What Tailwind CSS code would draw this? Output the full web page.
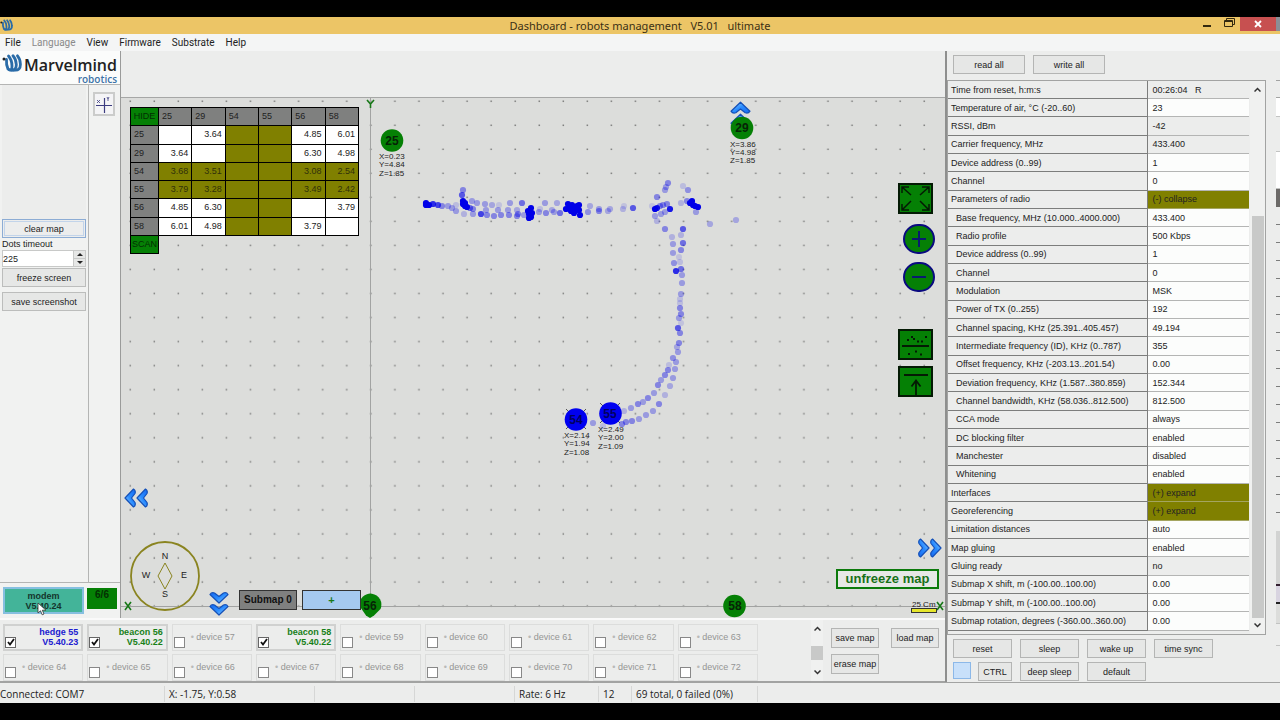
<!DOCTYPE html>
<html lang="en">

<head>
    <meta charset="UTF-8">
    <meta name="viewport" content="width=device-width, initial-scale=1.0">
    <title>Dashboard - robots management</title>
    <script src="https://cdn.jsdelivr.net/npm/@tailwindcss/browser@4"></script>
</head>

<body class="min-h-screen bg-black py-[17px] flex flex-col font-['Liberation_Sans',Arial,sans-serif] text-[9px] leading-3 text-[#222]">
    <svg class="absolute w-0 h-0">
        <defs>
            <linearGradient id="arrowFill" x1="0" y1="0" x2="1" y2="1">
                <stop offset="0" stop-color="#9ad8ff" />
                <stop offset="0.5" stop-color="#2a8cff" />
                <stop offset="1" stop-color="#1668f0" />
            </linearGradient>
            <symbol id="chevron" viewBox="0 0 20 12">
                <path d="M10 1 L19 9.500 Q17.500 12 14.500 11 L10 7.500 L5.500 11 Q2.500 12 1 9.500 Z" fill="url(#arrowFill)" stroke="#1450b8" stroke-width="1.200" stroke-linejoin="round" />
            </symbol>
            <symbol id="waves" viewBox="0 0 20 18">
                <g fill="none" stroke="#2a6ca8" stroke-width="2.800" stroke-linecap="round">
                    <path d="M4.500 5.500 Q4 11 6 15 Q10.200 17.500 10 12 Q10 6 6.500 2" />
                    <path d="M7.500 16 Q14.500 17.500 14.300 10.500 Q14 5 11 1.800" />
                    <path d="M12 16 Q18.700 17 18.400 10 Q18.300 5 15.500 1.800" />
                </g>
                <circle cx="2" cy="5" r="1.500" fill="#222" />
            </symbol>
        </defs>
    </svg>

    <div class="flex-1 flex flex-col bg-[#ecedec] overflow-hidden">
        <header class="relative h-[17px] bg-[#ecc566] flex items-center justify-center font-['Noto_Sans',sans-serif]">
            <svg class="absolute left-0 top-[2px] w-[13px] h-[12px]"><use href="#waves" /></svg>
            <h1 class="text-[11px] leading-4 text-[#3b3015] whitespace-pre">Dashboard - robots management   V5.01   ultimate</h1>
            <div class="absolute right-0 top-0 flex">
                <button aria-label="Minimize" class="w-[22px] h-[14px] flex justify-center items-end pb-[4px]"><span class="w-[8px] h-[2px] bg-[#33290f]"></span></button>
                <button aria-label="Restore" class="w-[22px] h-[14px] flex justify-center">
                    <svg class="w-[11px] h-[11px]" viewBox="0 0 11 11" fill="none" stroke="#33290f"><path d="M2.500 3V1.500h8v6h-1.500M.5 3.500h8v6h-8zM.5 4.500h8" /></svg>
                </button>
                <button aria-label="Close" class="w-[36px] h-[14px] bg-[#c75050] flex justify-center items-center">
                    <svg class="w-[8px] h-[8px]" viewBox="0 0 8 8" stroke="#fff" stroke-width="1.800"><path d="M1 1l6 6M7 1l-6 6" /></svg>
                </button>
                <div class="w-[4px] h-[14px] bg-[#8a8f96]"></div>
            </div>
        </header>

        <nav class="h-[17px] px-[5px] bg-[#f4f5f5] flex items-center gap-[11px] font-[Roboto,sans-serif] text-[10px] text-[#222]">
            <button>File</button>
            <button class="text-[#8a8a8a]">Language</button>
            <button>View</button>
            <button>Firmware</button>
            <button>Substrate</button>
            <button>Help</button>
        </nav>

        <div class="flex-1 flex min-h-0">
            <main class="flex-1 min-w-0 flex flex-col">
                <div class="flex-1 flex min-h-0">
                    <!-- left tools -->
                    <aside class="w-[121px] shrink-0 flex flex-col border-r border-[#9a9b9a] bg-[#f1f2f1]">
                        <div class="h-[34px] bg-[#fbfcfb] border-b border-[#b4b5b4] pl-[2px] pr-[3px] flex justify-between">
                            <svg class="w-[20px] h-[18px] mt-[3px] shrink-0"><use href="#waves" /></svg>
                            <div class="font-['Open_Sans',sans-serif] font-semibold text-right">
                                <div class="text-[16px] leading-[18px] mt-[5px] text-[#222]">Marvelmind</div>
                                <div class="text-[10px] leading-[10px] text-[#3b73a8]">robotics</div>
                            </div>
                        </div>
                        <div class="flex-1 flex">
                            <div class="w-[89px] border-r border-[#b4b5b4] flex flex-col px-[2px]">
                                <div class="h-[134px] bg-[#ecedec]"></div>
                                <button class="h-[19px] border border-[#8cacd4] outline outline-1 -outline-offset-3 outline-[#c2d4ea] bg-[#eceded]">clear map</button>
                                <label for="timeout" class="leading-[13px] h-[12px]">Dots timeout</label>
                                <div class="flex h-[17px] bg-white border border-[#c8c9c8]">
                                    <input id="timeout" value="225" class="min-w-0 flex-1 bg-white outline-none">
                                    <div class="w-[12px] flex flex-col bg-[#e6e7e6] border-l border-[#c8c9c8]">
                                        <button aria-label="Increase" class="flex-1 flex items-center justify-center border-b border-[#c8c9c8]"><svg class="w-[6px] h-[3px]" viewBox="0 0 6 3"><path d="M3 0l3 3H0z" fill="#222" /></svg></button>
                                        <button aria-label="Decrease" class="flex-1 flex items-center justify-center"><svg class="w-[6px] h-[3px]" viewBox="0 0 6 3"><path d="M3 3l3-3H0z" fill="#222" /></svg></button>
                                    </div>
                                </div>
                                <button class="h-[19px] mt-px border border-[#bcbdbc] bg-[#e6e7e6]">freeze screen</button>
                                <button class="h-[19px] mt-[5px] border border-[#bcbdbc] bg-[#e6e7e6]">save screenshot</button>
                            </div>
                            <div class="flex-1 pt-[7px] pr-[2px] flex justify-center items-start">
                                <button aria-label="Axes" class="w-[22px] h-[24px] border-2 border-[#cbcccb] bg-[#f4f4f6]">
                                    <svg class="w-[18px] h-[20px]" viewBox="0 0 18 20" stroke="#3c3c80" fill="none"><path d="M1 11.500h16M9.500 4v15" stroke-width="1.200" /><path d="M2 6l3 3M5 6l-3 3M12 3l1 2 1-2M13 5v2" stroke-width=".8" /></svg>
                                </button>
                            </div>
                        </div>
                        <div class="relative h-[36px] border-t border-[#b4b5b4] flex gap-[3px] pt-[4px] pl-[3px] pr-[3px]">
                            <button class="w-[81px] h-[27px] bg-[#43b499] border-2 border-[#86bfe0] font-bold leading-[10px] text-[#14352c]">modem<br>V5.40.24</button>
                            <div class="flex-1 h-[21px] mt-px bg-[#058005] text-[#032f03] text-[10px] font-bold leading-[14px] text-center">6/6</div>
                            <svg class="absolute left-[37px] top-[19px] w-[10px] h-[14px]" viewBox="0 0 10 14"><path d="M1 1v10l2.500-2.200 1.700 4 1.800-.8-1.700-3.800H9z" fill="#fff" stroke="#333" stroke-width=".8" /></svg>
                        </div>
                    </aside>

                    <div class="flex-1 flex flex-col min-w-0">
                        <div class="h-[47px] border-b border-[#a6a7a6]"></div>
                        <div class="relative flex-1 bg-[#dcdddb] overflow-hidden">
                            <svg class="absolute inset-0 w-full h-full">
                                <defs>
                                    <pattern id="grid" x="8" y="2" width="24.060" height="24.040" patternUnits="userSpaceOnUse">
                                        <rect x="0.500" y="0.500" width="1.500" height="1.500" fill="#7b7c7b" />
                                    </pattern>
                                </defs>
                                <rect width="100%" height="100%" fill="url(#grid)" />
                                <!-- world origin of the drawing is the window corner -->
                                <g transform="translate(-121 -98)">
                                    <path d="M370.500 98V606M121 606.500H945" stroke="#a2a3a2" />
                                    <path d="M367 100l3.500 4 3.500-4M370.500 104v4M125 602l6 8M131 602l-6 8M937 602l6 8M943 602l-6 8" stroke="#187818" stroke-width="1.600" fill="none" />
                                    <g id="track" fill="#0000e8"></g>
                                    <g stroke="#333" stroke-width=".8">
                                        <path d="M566 409l20 20M586 409l-20 20M600 403l20 20M620 403l-20 20" />
                                    </g>
                                    <use href="#chevron" x="730" y="101" width="21" height="13" />
                                    <use href="#chevron" x="730" y="113" width="21" height="13" />
                                    <g fill="#058005">
                                        <circle cx="392" cy="140.500" r="11.300" />
                                        <circle cx="742" cy="128" r="11.300" />
                                        <path d="M359.500 606a11 11 0 1 1 21 3l-6.500 6.500-4 2.500-4-2.500z" />
                                        <circle cx="734.500" cy="606" r="11.300" />
                                    </g>
                                    <g fill="#0000f0">
                                        <circle cx="576" cy="419.500" r="11.300" />
                                        <circle cx="610.500" cy="413.500" r="11.300" />
                                    </g>
                                    <g font-size="12" font-weight="bold" text-anchor="middle" fill="#062406">
                                        <text x="392" y="145">25</text>
                                        <text x="742" y="132">29</text>
                                        <text x="370" y="610">56</text>
                                        <text x="735" y="610">58</text>
                                    </g>
                                    <g font-size="12" font-weight="bold" text-anchor="middle" fill="#000060">
                                        <text x="576" y="424">54</text>
                                        <text x="610" y="418">55</text>
                                    </g>
                                    <g font-size="8" fill="#222">
                                        <text x="379" y="159">X=0.23</text><text x="379" y="167">Y=4.84</text><text x="379" y="176">Z=1.85</text>
                                        <text x="730" y="147">X=3.86</text><text x="730" y="155">Y=4.98</text><text x="730" y="163">Z=1.85</text>
                                        <text x="564" y="438">X=2.14</text><text x="564" y="446">Y=1.94</text><text x="564" y="455">Z=1.08</text>
                                        <text x="598" y="432">X=2.49</text><text x="598" y="440">Y=2.00</text><text x="598" y="449">Z=1.09</text>
                                        <text x="912" y="607">25 Cm</text>
                                    </g>
                                    <rect x="911.500" y="608.500" width="25" height="4" fill="#e6e62a" stroke="#333" />
                                    <!-- compass -->
                                    <g fill="none" stroke="#8a8420">
                                        <circle cx="165" cy="576" r="34" stroke-width="1.800" />
                                        <path d="M165 563l7 13-7 13-7-13z" />
                                    </g>
                                    <g font-size="9" text-anchor="middle" fill="#222">
                                        <text x="165" y="559">N</text><text x="165" y="597">S</text><text x="146" y="578">W</text><text x="184" y="578">E</text>
                                    </g>
                                </g>
                            </svg>

                            <table class="absolute left-[9px] top-[9px] w-[229px] h-[147px] table-fixed border-collapse text-right leading-[11px]">
                                <colgroup><col class="w-[28px]"></colgroup>
                                <tbody id="distances"></tbody>
                            </table>

                            <button aria-label="Scroll left" class="absolute left-[3px] top-[390px] w-[24px] h-[20px]">
                                <svg class="w-full h-full" viewBox="0 0 24 20"><g transform="rotate(-90 10 10)"><use href="#chevron" x="0" y="0" width="20" height="12" /><use href="#chevron" x="0" y="12" width="20" height="12" /></g></svg>
                            </button>
                            <button aria-label="Scroll right" class="absolute left-[797px] top-[440px] w-[24px] h-[20px]">
                                <svg class="w-full h-full" viewBox="0 0 24 20"><g transform="rotate(90 10 10)"><use href="#chevron" x="0" y="-4" width="20" height="12" /><use href="#chevron" x="0" y="8" width="20" height="12" /></g></svg>
                            </button>
                            <button aria-label="Scroll down" class="absolute left-[87px] top-[494px] w-[22px] h-[24px]">
                                <svg class="w-full h-full" viewBox="0 0 22 24"><g transform="rotate(180 11 12)"><use href="#chevron" x="1" y="0" width="20" height="12" /><use href="#chevron" x="1" y="12" width="20" height="12" /></g></svg>
                            </button>

                            <div class="absolute left-[118px] top-[492px] flex gap-[5px]">
                                <button class="w-[58px] h-[20px] bg-[#7f807f] border border-[#333] text-[10px] font-bold text-[#111]">Submap 0</button>
                                <button class="w-[59px] h-[20px] bg-[#a5c9f0] border border-[#333] text-[11px] font-bold text-[#187818]">+</button>
                            </div>
                            <button class="absolute right-[6px] top-[471px] w-[103px] h-[20px] bg-[#e6e8e6] border-2 border-[#0c7a0c] text-[13px] font-bold text-[#187018]">unfreeze map</button>

                            <button aria-label="Fit map" class="absolute right-[12px] top-[85px] w-[35px] h-[31px] bg-[#058005] border-2 border-[#041a04]">
                                <svg class="w-[31px] h-[27px]" viewBox="0 0 31 27" fill="none" stroke="#041a04" stroke-width="1.500"><path d="M2 8V2h7M2 2l9 8M22 2h7v6M29 2l-9 8M2 19v6h7M2 25l9-9M22 25h7v-6M29 25l-9-9" /></svg>
                            </button>
                            <button aria-label="Zoom in" class="absolute right-[10px] top-[126px] w-[32px] h-[30px] rounded-full bg-[#058005] border-2 border-[#0a0a80] flex items-center justify-center">
                                <svg class="w-[16px] h-[16px]" viewBox="0 0 16 16" stroke="#0a1a70" stroke-width="2"><path d="M1 8h14M8 0v16" /></svg>
                            </button>
                            <button aria-label="Zoom out" class="absolute right-[10px] top-[164px] w-[32px] h-[30px] rounded-full bg-[#058005] border-2 border-[#0a0a80] flex items-center justify-center">
                                <svg class="w-[16px] h-[16px]" viewBox="0 0 16 16" stroke="#0a1a70" stroke-width="2"><path d="M1 8h14" /></svg>
                            </button>
                            <button aria-label="Show dots" class="absolute right-[12px] top-[231px] w-[35px] h-[31px] bg-[#058005] border-2 border-[#041a04]">
                                <svg class="w-[31px] h-[27px]" viewBox="0 0 31 27" fill="#041a04"><path d="M2 14h27v2H2zM7 8h2v2H7zM11 5h2v2h-2zM13 7h2v2h-2zM17 9.500h2v2h-2zM21 9.500h2v2h-2zM25 5h2v2h-2zM8 22h2v2H8zM15 19.500h2v2h-2zM20 22.500h2v2h-2z" /></svg>
                            </button>
                            <button aria-label="Move up" class="absolute right-[12px] top-[268px] w-[35px] h-[31px] bg-[#058005] border-2 border-[#041a04]">
                                <svg class="w-[31px] h-[27px]" viewBox="0 0 31 27" fill="none" stroke="#041a04" stroke-width="1.800"><path d="M4 7h24M16 12v15M11.500 18.500l4.500-6 4.500 6" /></svg>
                            </button>
                        </div>
                    </div>
                </div>

                <!-- devices -->
                <section class="h-[65px] shrink-0 border-t-2 border-t-[#fafafa] border-b-2 border-b-[#a2a3a2] flex">
                    <div id="devices" class="w-[758px] shrink-0 pl-[3px] pt-1 grid grid-cols-9 grid-rows-[27px_27px] gap-x-1 gap-y-[3px]"></div>
                    <div class="ml-auto mr-[8px] w-[12px] flex flex-col items-center justify-between py-[6px] bg-[#f0f1f0]">
                        <svg class="w-[7px] h-[5px]" viewBox="0 0 7 5" fill="none" stroke="#333" stroke-width="1.500"><path d="M.5 4.500l3-3 3 3" /></svg>
                        <div class="w-full h-[14px] mt-[5px] bg-[#c8c9c8]"></div>
                        <svg class="w-[7px] h-[5px]" viewBox="0 0 7 5" fill="none" stroke="#333" stroke-width="1.500"><path d="M.5 .5l3 3 3-3" /></svg>
                    </div>
                    <div class="mr-[6px] pt-[8px] grid grid-cols-[48px_48px] auto-rows-[20px] gap-x-3 gap-y-[6px] content-start">
                        <button class="border border-[#b4b5b4] bg-[#e6e7e6]">save map</button>
                        <button class="border border-[#b4b5b4] bg-[#e6e7e6]">load map</button>
                        <button class="border border-[#b4b5b4] bg-[#e6e7e6]">erase map</button>
                    </div>
                </section>
            </main>

            <!-- parameters -->
            <section class="w-[335px] shrink-0 flex border-b border-[#a2a3a2]">
                <div class="flex-1 flex flex-col border-l-2 border-[#8e8f8e]">
                    <div class="h-[29px] pl-[6px] pt-[4px] flex gap-[8px]">
                        <button class="w-[72px] h-[19px] border border-[#b4b5b4] bg-[#e6e7e6]">read all</button>
                        <button class="w-[72px] h-[19px] border border-[#b4b5b4] bg-[#e6e7e6]">write all</button>
                    </div>
                    <div class="flex mr-[10px] border border-[#a2a3a2] h-[555px]">
                        <table class="w-[301px] h-[550px] table-fixed border-collapse">
                            <colgroup><col class="w-[199px]"><col></colgroup>
                            <tbody id="params"></tbody>
                        </table>
                        <div class="ml-auto w-[15px] flex flex-col items-center py-[6px] bg-[#f0f1f0]">
                            <svg class="w-[7px] h-[5px]" viewBox="0 0 7 5" fill="none" stroke="#333" stroke-width="1.500"><path d="M.5 4.500l3-3 3 3" /></svg>
                            <div class="w-[12px] flex-1 mt-[124px] mb-[5px] bg-[#c8c9c8]"></div>
                            <svg class="w-[7px] h-[5px]" viewBox="0 0 7 5" fill="none" stroke="#333" stroke-width="1.500"><path d="M.5 .5l3 3 3-3" /></svg>
                        </div>
                    </div>
                    <div class="pl-[6px] pt-[4px] grid grid-cols-[59px_59px_59px_59px] auto-rows-[19px] gap-x-2 gap-y-1">
                        <button class="border border-[#b4b5b4] bg-[#e6e7e6]">reset</button>
                        <button class="border border-[#b4b5b4] bg-[#e6e7e6]">sleep</button>
                        <button class="border border-[#b4b5b4] bg-[#e6e7e6]">wake up</button>
                        <button class="border border-[#b4b5b4] bg-[#e6e7e6]">time sync</button>
                        <div class="flex justify-between">
                            <button aria-label="Color" class="w-[18px] h-[17px] border border-[#8cb8e8] bg-[#c8e0fa]"></button>
                            <button class="w-[34px] border border-[#b4b5b4] bg-[#e6e7e6]">CTRL</button>
                        </div>
                        <button class="border border-[#b4b5b4] bg-[#e6e7e6]">deep sleep</button>
                        <button class="border border-[#b4b5b4] bg-[#e6e7e6]">default</button>
                    </div>
                </div>
                <!-- sliver of the window behind -->
                <div class="w-[4px] flex flex-col pt-[29px] bg-[#ecedec]">
                    <div class="h-[18px] border-y border-[#a2a3a2]"></div>
                    <div class="h-[18px] bg-white"></div>
                    <div class="h-[36px] border-y border-[#c2c3c2]"></div>
                    <div class="h-[37px] bg-white border-b border-[#c2c3c2]"></div>
                    <div class="h-[18px] bg-[#6c6a68]"></div>
                    <div id="sliver"></div>
                    <div class="h-[55px] mt-[18px] bg-[#d2d3d2] border-b-2 border-[#332030]"></div>
                    <div class="h-[18px] bg-[#d8d4e0] border-b-2 border-[#222]"></div>
                    <div class="h-[20px] bg-[#dcdddb] border-b border-[#c2c3c2]"></div>
                    <div class="h-[22px] border-b border-[#c2c3c2]"></div>
                </div>
            </section>
        </div>

        <footer class="h-[20px] pt-[2px] flex items-center font-['Open_Sans',sans-serif] text-[10px] leading-4 text-[#222]">
            <div class="w-[165px] border-r border-[#d6d7d6]">Connected: COM7</div>
            <div class="w-[150px] border-r border-[#d6d7d6] pl-1">X: -1.75, Y:0.58</div>
            <div class="w-[100px] h-4 border-r border-[#d6d7d6]"></div>
            <div class="w-[100px] h-4 border-r border-[#d6d7d6]"></div>
            <div class="w-[84px] border-r border-[#d6d7d6] pl-1">Rate: 6 Hz</div>
            <div class="w-[33px] border-r border-[#d6d7d6] pl-1">12</div>
            <div class="w-[126px] border-r border-[#d6d7d6] pl-1">69 total, 0 failed (0%)</div>
        </footer>
    </div>

    <script>
        // Hedgehog track: x, y, opacity
        const track = [
            [426, 203, 1], [426, 205, 1], [429, 205, 1], [433, 204, .8], [438, 205, .7], [442, 206, .4], [448, 206, .3], [452, 208, .3], [456, 211, .3], [456, 205, .15],
            [463, 190, .4], [462, 195, .6], [463, 201, 1], [463, 204, 1], [465, 203, 1], [465, 206, 1], [467, 207, 1], [472, 201, .3], [473, 209, .4], [470, 208, .5], [477, 203, .3], [464, 214, .2], [473, 214, .3],
            [485, 204, .3], [481, 214, .7], [486, 210, .3], [487, 215, .4], [492, 205, .25], [494, 216, .4], [499, 205, .12], [498, 210, .3], [501, 215, .4], [510, 203, .3], [508, 210, .3], [509, 215, .4],
            [517, 210, .25], [517, 216, .4], [518, 214, .4], [522, 203, .5], [524, 215, .3], [531, 208, 1], [528, 211, 1], [532, 213, 1], [529, 218, 1], [531, 217, 1], [529, 214, 1],
            [540, 209, .15], [539, 212, .3], [545, 203, .3], [546, 213, .4], [552, 210, .25], [557, 203, .25], [554, 212, .3], [560, 213, .5],
            [568, 204, 1], [566, 209, 1], [570, 208, 1], [574, 207, 1], [579, 205, 1], [579, 210, 1], [574, 213, 1], [580, 215, 1], [571, 211, 1], [576, 210, 1], [577, 206, 1], [572, 205, 1],
            [590, 206, .25], [588, 212, .35], [599, 209, .3], [599, 211, .4], [610, 209, .25], [608, 211, .25], [624, 206, .12], [623, 209, .2], [633, 208, .6],
            [652, 206, .12], [655, 209, 1], [657, 208, .9], [657, 197, .4], [655, 216, .3], [657, 221, .2], [661, 214, .3], [663, 205, .4], [660, 206, .4], [667, 204, .4], [670, 209, .9], [665, 212, .3],
            [665, 190, .3], [666, 187, .3], [668, 183, .4], [683, 186, .15], [688, 190, .35], [681, 203, .2], [687, 201, .4], [692, 201, 1], [690, 203, 1], [693, 205, 1], [698, 207, 1], [695, 206, 1], [696, 212, .3], [710, 224, .25], [736, 220, .25],
            [665, 229, .4], [683, 229, .6], [672, 237, .2], [681, 235, .2], [673, 244, .3], [683, 243, .5], [681, 250, .4], [673, 253, .3], [679, 257, .12], [680, 262, .15], [674, 263, .35], [681, 269, .5], [676, 271, .8], [682, 275, .3], [682, 283, .3],
            [681, 294, .3], [680, 299, .15], [680, 303, .15], [680, 308, .4], [681, 314, .4], [679, 318, .3], [681, 323, .12], [678, 328, .6], [680, 333, .4], [679, 343, .4], [677, 347, .25], [678, 352, .3],
            [673, 358, .35], [676, 362, .3], [669, 365, .15], [675, 369, .3], [668, 370, .4], [665, 375, .4], [673, 378, .3], [661, 380, .3], [658, 385, .4], [670, 386, .25], [654, 393, .3], [665, 395, .2],
            [648, 398, .4], [643, 402, .3], [638, 404, .4], [659, 404, .4], [631, 408, .3], [624, 411, .2], [653, 411, .3], [646, 415, .3], [639, 419, .3], [632, 421, .4], [626, 422, .4], [622, 424, .4], [603, 426, .15], [593, 423, .3],
        ];
        document.getElementById('track').innerHTML = track
            .map(([x, y, a]) => `<circle cx="${x}" cy="${y}" r="3.100" opacity="${a}"/>`).join('');

        // Distances between beacons
        const ids = [25, 29, 54, 55, 56, 58];
        const distances = {
            25: ['', '3.64', '', '', '4.85', '6.01'],
            29: ['3.64', '', '', '', '6.30', '4.98'],
            54: ['3.68', '3.51', '', '', '3.08', '2.54'],
            55: ['3.79', '3.28', '', '', '3.49', '2.42'],
            56: ['4.85', '6.30', '', '', '', '3.79'],
            58: ['6.01', '4.98', '', '', '3.79', ''],
        };
        const mobile = id => id === 54 || id === 55;
        const head = id => `<th class="border border-black bg-[#7f807f] pl-[3px] text-left font-normal">${id}</th>`;
        const action = name => `<td class="border border-black bg-[#058005] p-0 text-center text-[#032f03]"><button>${name}</button></td>`;
        document.getElementById('distances').innerHTML =
            `<tr>${action('HIDE')}${ids.map(head).join('')}</tr>` +
            ids.map(row => `<tr>${head(row)}${distances[row].map((d, i) =>
                mobile(row) || mobile(ids[i])
                    ? `<td class="border border-black bg-[#808000] pr-[3px] text-[#30300a]">${d}</td>`
                    : `<td class="border border-black bg-white pr-[3px]">${d}</td>`).join('')}</tr>`).join('') +
            `<tr>${action('SCAN')}</tr>`;

        // Device parameters: name, value, type (r - read only, g - group)
        const params = [
            ['Time from reset, h:m:s', '00:26:04   R', 'r'],
            ['Temperature of air, °C (-20..60)', '23'],
            ['RSSI, dBm', '-42', 'r'],
            ['Carrier frequency, MHz', '433.400', 'r'],
            ['Device address (0..99)', '1'],
            ['Channel', '0'],
            ['Parameters of radio', '(-) collapse', 'g'],
            ['  Base frequency, MHz (10.000..4000.000)', '433.400'],
            ['  Radio profile', '500 Kbps'],
            ['  Device address (0..99)', '1'],
            ['  Channel', '0'],
            ['  Modulation', 'MSK'],
            ['  Power of TX (0..255)', '192'],
            ['  Channel spacing, KHz (25.391..405.457)', '49.194'],
            ['  Intermediate frequency (ID), KHz (0..787)', '355'],
            ['  Offset frequency, KHz (-203.13..201.54)', '0.00'],
            ['  Deviation frequency, KHz (1.587..380.859)', '152.344'],
            ['  Channel bandwidth, KHz (58.036..812.500)', '812.500'],
            ['  CCA mode', 'always'],
            ['  DC blocking filter', 'enabled'],
            ['  Manchester', 'disabled'],
            ['  Whitening', 'enabled'],
            ['Interfaces', '(+) expand', 'g'],
            ['Georeferencing', '(+) expand', 'g'],
            ['Limitation distances', 'auto'],
            ['Map gluing', 'enabled'],
            ['Gluing ready', 'no', 'r'],
            ['Submap X shift, m (-100.00..100.00)', '0.00'],
            ['Submap Y shift, m (-100.00..100.00)', '0.00'],
            ['Submap rotation, degrees (-360.00..360.00)', '0.00'],
        ];
        const valueClass = {
            r: 'border-b border-[#b4b5b4] p-0 pl-[5px] whitespace-pre bg-[#ecedec]',
            g: 'border-b border-[#a4a560] p-0 pl-[5px] whitespace-pre bg-[#808000]',
            w: 'border-b border-[#b4b5b4] p-0 pl-[5px] whitespace-pre bg-[#fcfdfc]',
        };
        document.getElementById('params').innerHTML = params.map(([name, value, type]) => `<tr>
            <th class="border-b border-r border-[#7c7d7c] p-0 pl-[3px] text-left font-normal whitespace-pre">${name}</th>
            <td class="${valueClass[type || 'w']}">${value}</td></tr>`).join('');

        // Device list
        const paired = {
            55: ['hedge 55', 'V5.40.23', 'text-[#2020d0]'],
            56: ['beacon 56', 'V5.40.22', 'text-[#188018]'],
            58: ['beacon 58', 'V5.40.22', 'text-[#188018]'],
        };
        const list = [55, 56, 57, 58, 59, 60, 61, 62, 63, 64, 65, 66, 67, 68, 69, 70, 71, 72];
        document.getElementById('devices').innerHTML = list.map(id => {
            const dev = paired[id];
            return dev
                ? `<label class="relative flex items-end border-2 border-[#d0d1d0] pb-px pr-[3px]">
                    <input type="checkbox" checked class="peer appearance-none w-[11px] h-[11px] shrink-0 border border-[#666] bg-white">
                    <svg class="absolute left-[2px] bottom-[3px] w-[8px] h-[8px] hidden peer-checked:block" viewBox="0 0 8 8" fill="none" stroke="#111" stroke-width="1.800"><path d="M1 4l2 2.500L7 1" /></svg>
                    <span class="flex-1 self-center text-right font-bold leading-[10px] ${dev[2]}">${dev[0]}<br>${dev[1]}</span></label>`
                : `<label class="flex items-end border border-[#dcdddc] pb-[2px] pl-px text-[#949594]">
                    <input type="checkbox" class="appearance-none w-[11px] h-[11px] shrink-0 border border-[#888] bg-white">
                    <span class="ml-[6px] self-center whitespace-pre"><span class="text-[#b8b9b8]">•</span> device ${id}</span></label>`;
        }).join('');

        document.getElementById('sliver').innerHTML =
            '<div class="h-[18px] border-b border-[#7c7d7c]"></div>'.repeat(17);
    </script>
</body>

</html>
